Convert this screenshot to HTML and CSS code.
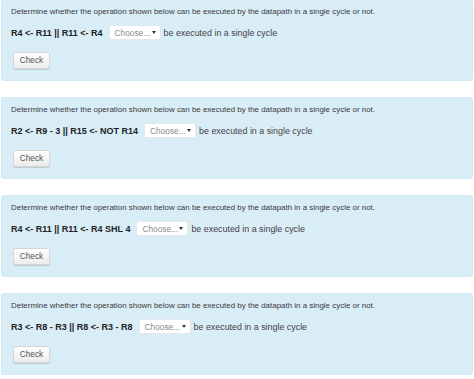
FILE: index.html
```html
<!DOCTYPE html>
<html>
<head>
<meta charset="utf-8">
<link rel="stylesheet" href="styles.css">
</head>
<body>
<div class="list">
  <div class="que">
    <div class="qtext">Determine whether the operation shown below can be executed by the datapath in a single cycle or not.</div>
    <div class="row">
      <span class="op">R4 &lt;- R11 || R11 &lt;- R4</span>
      <span class="select"><span class="ph">Choose...</span><span class="caret"></span></span>
      <span class="tail">be executed in a single cycle</span>
    </div>
    <div class="btnrow"><button class="check">Check</button></div>
  </div>
  <div class="que">
    <div class="qtext">Determine whether the operation shown below can be executed by the datapath in a single cycle or not.</div>
    <div class="row">
      <span class="op">R2 &lt;- R9 - 3 || R15 &lt;- NOT R14</span>
      <span class="select"><span class="ph">Choose...</span><span class="caret"></span></span>
      <span class="tail">be executed in a single cycle</span>
    </div>
    <div class="btnrow"><button class="check">Check</button></div>
  </div>
  <div class="que">
    <div class="qtext">Determine whether the operation shown below can be executed by the datapath in a single cycle or not.</div>
    <div class="row">
      <span class="op">R4 &lt;- R11 || R11 &lt;- R4 SHL 4</span>
      <span class="select"><span class="ph">Choose...</span><span class="caret"></span></span>
      <span class="tail">be executed in a single cycle</span>
    </div>
    <div class="btnrow"><button class="check">Check</button></div>
  </div>
  <div class="que">
    <div class="qtext">Determine whether the operation shown below can be executed by the datapath in a single cycle or not.</div>
    <div class="row">
      <span class="op">R3 &lt;- R8 - R3 || R8 &lt;- R3 - R8</span>
      <span class="select"><span class="ph">Choose...</span><span class="caret"></span></span>
      <span class="tail">be executed in a single cycle</span>
    </div>
    <div class="btnrow"><button class="check">Check</button></div>
  </div>
</div>
</body>
</html>
```
FILE: styles.css
```css
html, body {
  margin: 0;
  padding: 0;
  background: #ffffff;
}
body {
  font-family: "Liberation Sans", Arial, sans-serif;
  color: #333;
}
.list {
  display: flex;
  flex-direction: column;
  gap: 16px;
  padding: 0 1px;
  margin-top: -1px;
}
.que {
  background: #d9edf7;
  border: 1px solid #d3e8f3;
  border-radius: 3px;
  height: 82px;
  box-sizing: border-box;
  padding: 6px 9px 0 9px;
}
.qtext {
  font-size: 7.95px;
  line-height: 11px;
  color: #3a3a3a;
}
.row {
  display: flex;
  align-items: center;
  height: 15px;
  margin-top: 8px;
}
.op {
  font-weight: bold;
  font-size: 9px;
  color: #222;
  margin-right: 6px;
}
.select {
  display: inline-flex;
  align-items: center;
  justify-content: space-between;
  box-sizing: border-box;
  width: 52px;
  height: 15px;
  background: #fff;
  border: 1px solid #e2e8ec;
  border-radius: 2px;
  padding: 0 4px 0 5px;
  margin-right: 3px;
}
.ph {
  font-size: 8.3px;
  color: #8a8a8a;
}
.caret {
  width: 0;
  height: 0;
  border-left: 2px solid transparent;
  border-right: 2px solid transparent;
  border-top: 3px solid #333;
}
.tail {
  font-size: 8.9px;
  color: #444;
}
.btnrow {
  margin-top: 9px;
  padding-left: 2px;
}
.check {
  font-family: "Liberation Sans", Arial, sans-serif;
  font-size: 8.3px;
  color: #555;
  width: 37px;
  height: 17px;
  padding: 0;
  border: 1px solid #d6d6d6;
  border-radius: 2px;
  background: linear-gradient(#ffffff, #ececec);
  box-shadow: 0 1px 1px rgba(0,0,0,0.15);
}
```
